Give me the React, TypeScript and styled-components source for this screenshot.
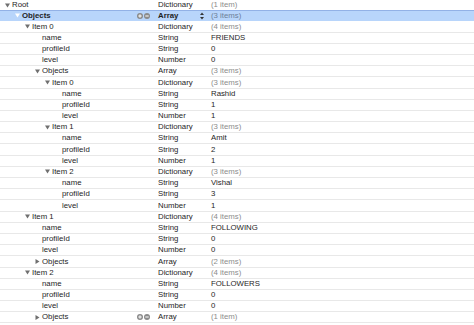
import React from 'react';
import styled, { createGlobalStyle } from 'styled-components';

type Row = {
  level: number;
  key: string;
  type: string;
  value: string;
  open?: boolean;
  muted?: boolean;
  selected?: boolean;
  buttons?: boolean;
};

const ROWS: Row[] = [
  { level: 0, key: 'Root', type: 'Dictionary', value: '(1 item)', open: true, muted: true },
  { level: 1, key: 'Objects', type: 'Array', value: '(3 items)', open: true, muted: true, selected: true, buttons: true },
  { level: 2, key: 'Item 0', type: 'Dictionary', value: '(4 items)', open: true, muted: true },
  { level: 3, key: 'name', type: 'String', value: 'FRIENDS' },
  { level: 3, key: 'profileId', type: 'String', value: '0' },
  { level: 3, key: 'level', type: 'Number', value: '0' },
  { level: 3, key: 'Objects', type: 'Array', value: '(3 items)', open: true, muted: true },
  { level: 4, key: 'Item 0', type: 'Dictionary', value: '(3 items)', open: true, muted: true },
  { level: 5, key: 'name', type: 'String', value: 'Rashid' },
  { level: 5, key: 'profileId', type: 'String', value: '1' },
  { level: 5, key: 'level', type: 'Number', value: '1' },
  { level: 4, key: 'Item 1', type: 'Dictionary', value: '(3 items)', open: true, muted: true },
  { level: 5, key: 'name', type: 'String', value: 'Amit' },
  { level: 5, key: 'profileId', type: 'String', value: '2' },
  { level: 5, key: 'level', type: 'Number', value: '1' },
  { level: 4, key: 'Item 2', type: 'Dictionary', value: '(3 items)', open: true, muted: true },
  { level: 5, key: 'name', type: 'String', value: 'Vishal' },
  { level: 5, key: 'profileId', type: 'String', value: '3' },
  { level: 5, key: 'level', type: 'Number', value: '1' },
  { level: 2, key: 'Item 1', type: 'Dictionary', value: '(4 items)', open: true, muted: true },
  { level: 3, key: 'name', type: 'String', value: 'FOLLOWING' },
  { level: 3, key: 'profileId', type: 'String', value: '0' },
  { level: 3, key: 'level', type: 'Number', value: '0' },
  { level: 3, key: 'Objects', type: 'Array', value: '(2 items)', open: false, muted: true },
  { level: 2, key: 'Item 2', type: 'Dictionary', value: '(4 items)', open: true, muted: true },
  { level: 3, key: 'name', type: 'String', value: 'FOLLOWERS' },
  { level: 3, key: 'profileId', type: 'String', value: '0' },
  { level: 3, key: 'level', type: 'Number', value: '0' },
  { level: 3, key: 'Objects', type: 'Array', value: '(1 item)', open: false, muted: true, buttons: true },
];

const GlobalStyle = createGlobalStyle`
  html, body {
    margin: 0;
    padding: 0;
    background: #ffffff;
  }
  body {
    font-family: "Liberation Sans", Arial, sans-serif;
    overflow: hidden;
  }
`;

const Disclosure = ({ open, selected }: { open: boolean; selected?: boolean }) => (
  <svg width="5" height="5" viewBox="0 0 5 5">
    {open ? (
      <polygon points="0,0.5 5,0.5 2.5,4.5" fill={selected ? '#ffffff' : '#6f6f6f'} />
    ) : (
      <polygon points="0.5,0 4.5,2.5 0.5,5" fill={selected ? '#ffffff' : '#6f6f6f'} />
    )}
  </svg>
);

const RoundButton = ({ minus }: { minus?: boolean }) => (
  <svg width="6" height="6" viewBox="0 0 6 6">
    <circle cx="3" cy="3" r="3" fill="#8a8a8a" />
    <rect x="1.3" y="2.5" width="3.4" height="1" fill="#ffffff" />
    {!minus && <rect x="2.5" y="1.3" width="1" height="3.4" fill="#ffffff" />}
  </svg>
);

const Stepper = () => (
  <svg width="4" height="8" viewBox="0 0 4 8">
    <polygon points="0,3 4,3 2,0.5" fill="#333" />
    <polygon points="0,5 4,5 2,7.5" fill="#333" />
  </svg>
);

const App = () => {
  return (
    <>
      <GlobalStyle />
      <Outline>
        {ROWS.map((row, i) => (
          <RowStyle key={i} $selected={row.selected}>
            <KeyCell $level={row.level} $selected={row.selected}>
              <Toggle>{row.open !== undefined && <Disclosure open={row.open} selected={row.selected} />}</Toggle>
              <KeyText>{row.key}</KeyText>
              {row.buttons && (
                <Buttons>
                  <RoundButton />
                  <RoundButton minus />
                </Buttons>
              )}
            </KeyCell>
            <TypeCell $selected={row.selected}>
              <span>{row.type}</span>
              {row.selected && <Stepper />}
            </TypeCell>
            <ValueCell $muted={row.muted} $selected={row.selected}>
              {row.value}
            </ValueCell>
          </RowStyle>
        ))}
      </Outline>
    </>
  );
};

export default App;

const Outline = styled.div`
  width: 474px;
  height: 325px;
  display: flex;
  flex-direction: column;
  font-size: 7.8px;
  color: #1e1e1e;
`;

const RowStyle = styled.div<{ $selected?: boolean }>`
  flex: 0 0 11.2px;
  box-sizing: border-box;
  display: grid;
  grid-template-columns: 155px 55px 1fr;
  align-items: center;
  border-bottom: 1px solid ${({ $selected }) => ($selected ? '#b8d5fb' : '#e8e8e8')};
  border-top: ${({ $selected }) => ($selected ? '1px solid #92b1e6' : 'none')};
  margin-top: ${({ $selected }) => ($selected ? '-1px' : '0')};
  background: ${({ $selected }) => ($selected ? '#b8d5fb' : '#ffffff')};
  line-height: 1;
  white-space: nowrap;
`;

const KeyCell = styled.div<{ $level: number; $selected?: boolean }>`
  display: flex;
  align-items: center;
  padding-left: ${({ $level }) => 5 + $level * 10}px;
  padding-right: 5px;
  font-weight: ${({ $selected }) => ($selected ? 700 : 400)};
`;

const Toggle = styled.span`
  width: 7px;
  flex: 0 0 7px;
  display: flex;
  align-items: center;
`;

const KeyText = styled.span`
  flex: 1;
`;

const Buttons = styled.span`
  display: flex;
  gap: 1px;
  align-items: center;
`;

const TypeCell = styled.div<{ $selected?: boolean }>`
  display: flex;
  align-items: center;
  justify-content: space-between;
  padding-left: 3px;
  padding-right: 6px;
  font-weight: ${({ $selected }) => ($selected ? 700 : 400)};
`;

const ValueCell = styled.div<{ $muted?: boolean; $selected?: boolean }>`
  padding-left: 1px;
  color: ${({ $muted, $selected }) => ($selected ? '#6d7f99' : $muted ? '#8c8c8c' : '#1e1e1e')};
`;
